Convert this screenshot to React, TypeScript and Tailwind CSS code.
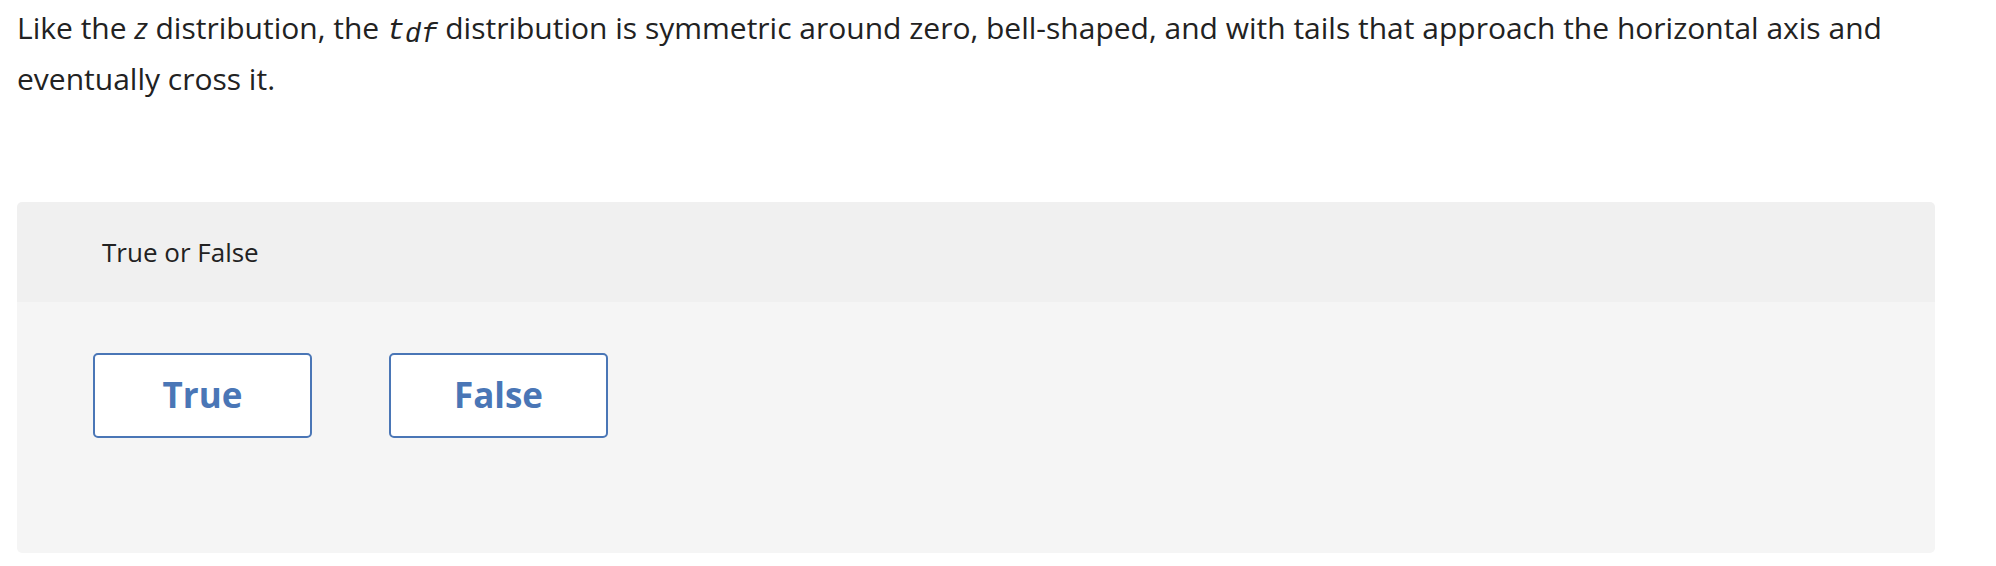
export default function App() {
  return (
    <main className="min-h-screen bg-white pl-[17px] pr-[61px] pt-1 font-['Open_Sans','Liberation_Sans',sans-serif] text-[#222]">
      <p className="text-[30px] leading-[48px]">
        Like the <i>z</i> distribution, the{' '}
        <span className="font-['Liberation_Mono',monospace] italic">
          t<sub className="relative top-[3px] text-[27px] align-baseline">df</sub>
        </span>{' '}
        distribution is symmetric around zero, bell-shaped, and with tails that approach the horizontal axis and
        eventually cross it.
      </p>

      <section className="mt-[99px] overflow-hidden rounded-[5px]">
        <div className="flex h-[100px] items-center bg-[#f0f0f0] pl-[85px] text-[26px]">True or False</div>
        <div className="flex h-[251px] gap-[77px] bg-[#f5f5f5] pl-[76px] pt-[51px]">
          {['True', 'False'].map((label) => (
            <button
              key={label}
              className="h-[85px] w-[219px] rounded-[5px] border-2 border-[#4a76b6] bg-white text-[35px] font-bold text-[#4a76b6]"
            >
              {label}
            </button>
          ))}
        </div>
      </section>
    </main>
  );
}
